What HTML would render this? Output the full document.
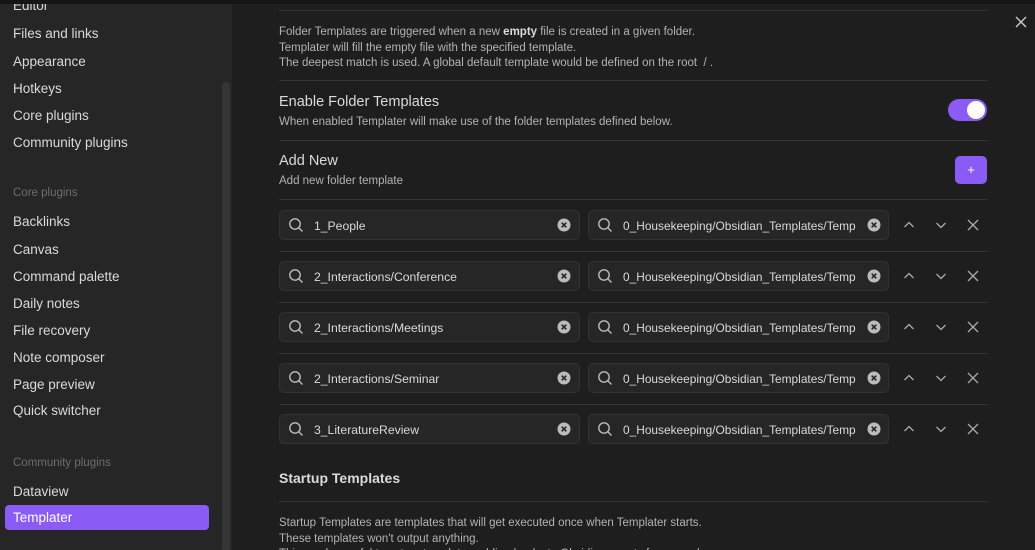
<!DOCTYPE html>
<html><head><meta charset="utf-8"><style>
*{margin:0;padding:0;box-sizing:border-box}
html,body{width:1035px;height:550px;overflow:hidden}
body{background:#1e1e1e;font-family:"Liberation Sans",sans-serif;color:#dadada;position:relative}
.a{position:absolute;white-space:nowrap}
#side{position:absolute;left:0;top:0;width:232px;height:550px;background:#262626}
.si{position:absolute;left:13px;font-size:13.5px;color:#dadada}
.sh{position:absolute;left:13px;font-size:11.5px;color:#6d6d6d}
.hr{position:absolute;left:279px;width:708px;height:1px;background:#363636}
.d{font-size:11.5px;color:#b3b3b3;line-height:15.5px}
.t{font-size:14.5px;color:#dadada}
.inp{position:absolute;height:30px;background:#262626;border:1px solid #323232;border-radius:5px}
.inp .tx{position:absolute;left:34px;top:7px;font-size:12.2px;color:#dadada;white-space:nowrap}
.inp svg{position:absolute}
</style></head><body>
<div id="side">
<div class="si" style="top:-2px">Editor</div>
<div class="si" style="top:26px">Files and links</div>
<div class="si" style="top:54px">Appearance</div>
<div class="si" style="top:81px">Hotkeys</div>
<div class="si" style="top:108px">Core plugins</div>
<div class="si" style="top:135px">Community plugins</div>
<div class="sh" style="top:187px">Core plugins</div>
<div class="si" style="top:214px">Backlinks</div>
<div class="si" style="top:242px">Canvas</div>
<div class="si" style="top:269px">Command palette</div>
<div class="si" style="top:296px">Daily notes</div>
<div class="si" style="top:323px">File recovery</div>
<div class="si" style="top:350px">Note composer</div>
<div class="si" style="top:377px">Page preview</div>
<div class="si" style="top:403px">Quick switcher</div>
<div class="sh" style="top:457px">Community plugins</div>
<div class="si" style="top:484px">Dataview</div>
<div class="a" style="left:5px;top:505px;width:204px;height:25px;background:#8a5cf5;border-radius:4px"></div>
<div class="si" style="top:510px;color:#fff">Templater</div>
<div class="a" style="left:222px;top:82px;width:8px;height:470px;background:#353535;border-radius:4px"></div>
</div>
<div class="a" style="left:0;top:0;width:1035px;height:4px;background:#151515"></div>
<div class="hr" style="top:10px"></div>
<div class="a d" style="left:279px;top:25px">Folder Templates are triggered when a new <b style="color:#dadada">empty</b> file is created in a given folder.<br>Templater will fill the empty file with the specified template.<br>The deepest match is used. A global default template would be defined on the root &nbsp;/ .</div>
<div class="hr" style="top:80px"></div>
<div class="a t" style="left:279px;top:94px">Enable Folder Templates</div>
<div class="a d" style="left:279px;top:115px">When enabled Templater will make use of the folder templates defined below.</div>
<div class="a" style="left:948px;top:99px;width:39px;height:22px;border-radius:11px;background:#8a5cf5"></div>
<div class="a" style="left:967px;top:101px;width:18px;height:18px;border-radius:9px;background:#fff"></div>
<div class="hr" style="top:140px"></div>
<div class="a t" style="left:279px;top:153px">Add New</div>
<div class="a d" style="left:279px;top:174px">Add new folder template</div>
<div class="a" style="left:955px;top:156px;width:32px;height:28px;border-radius:5px;background:#8a5cf5;color:#fff;font-size:13px;text-align:center;line-height:27px">+</div>
<div class="hr" style="top:199px"></div>

<div id="rows"></div>
<script>
var L=["1_People","2_Interactions/Conference","2_Interactions/Meetings","2_Interactions/Seminar","3_LiteratureReview"];
var s="";
var mag='<svg width="16" height="16" viewBox="0 0 16 16" style="left:8px;top:6px"><circle cx="7" cy="7" r="5.2" fill="none" stroke="#bbb" stroke-width="1.4"/><path d="M11 11l3.5 3.5" stroke="#bbb" stroke-width="1.4"/></svg>';
function clr(x){return '<svg width="14" height="14" viewBox="0 0 14 14" style="left:'+x+'px;top:7px"><circle cx="7" cy="7" r="6.5" fill="#bbb"/><path d="M4.7 4.7l4.6 4.6M9.3 4.7l-4.6 4.6" stroke="#262626" stroke-width="1.6"/></svg>';}
for(var i=0;i<5;i++){var y=210+i*51;
s+='<div class="inp" style="left:279px;top:'+y+'px;width:301px">'+mag+'<div class="tx" style="top:8px">'+L[i]+'</div>'+clr(277)+'</div>';
s+='<div class="inp" style="left:588px;top:'+y+'px;width:301px">'+mag+'<div class="tx" style="top:8px;font-size:11.9px">0_Housekeeping/Obsidian_Templates/Temp</div>'+clr(278)+'</div>';
s+='<svg class="a" style="left:902px;top:'+(y+8)+'px" width="14" height="14" viewBox="0 0 14 14"><path d="M2.5 9l4.5-4.5 4.5 4.5" fill="none" stroke="#aaa" stroke-width="1.3"/></svg>';
s+='<svg class="a" style="left:934px;top:'+(y+8)+'px" width="14" height="14" viewBox="0 0 14 14"><path d="M2.5 5l4.5 4.5 4.5-4.5" fill="none" stroke="#aaa" stroke-width="1.3"/></svg>';
s+='<svg class="a" style="left:966px;top:'+(y+8)+'px" width="14" height="14" viewBox="0 0 14 14"><path d="M2 2l10 10M12 2L2 12" fill="none" stroke="#aaa" stroke-width="1.3"/></svg>';
if(i<4)s+='<div class="hr" style="top:'+(y+41)+'px"></div>';}
document.getElementById("rows").innerHTML=s;
</script>
<div class="a" style="left:279px;top:470px;font-size:14px;font-weight:bold;color:#dadada">Startup Templates</div>
<div class="hr" style="top:501px"></div>
<div class="a d" style="left:279px;top:516px">Startup Templates are templates that will get executed once when Templater starts.<br>These templates won't output anything.<br>This can be useful to set up templates adding hooks to Obsidian events for example.</div>
<svg class="a" style="left:1014px;top:15px" width="14" height="14" viewBox="0 0 14 14"><path d="M2 2l10 10M12 2L2 12" stroke="#ccc" stroke-width="1.4"/></svg>
</body></html>
